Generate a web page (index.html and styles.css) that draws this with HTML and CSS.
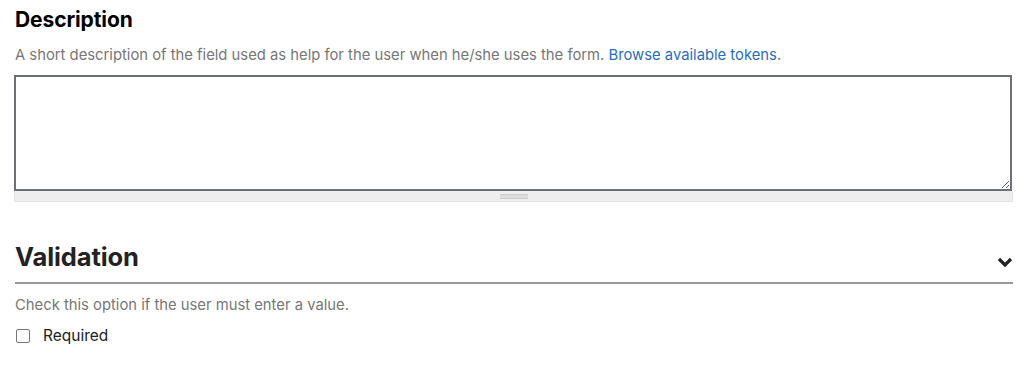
FILE: index.html
```html
<!DOCTYPE html>
<html>
<head>
<meta charset="utf-8">
<link rel="stylesheet" href="styles.css">
</head>
<body>
<div class="page">
  <section class="field">
    <label class="label" for="desc">Description</label>
    <div class="help">A short description of the field used as help for the user when he/she uses the form. <a href="#" class="link">Browse available tokens</a>.</div>
    <div class="textarea-wrap">
      <textarea id="desc" class="textarea"></textarea>
      <div class="grippie"><span class="grip"></span></div>
    </div>
  </section>
  <section class="details">
    <div class="summary">
      <h2 class="summary-title">Validation</h2>
      <svg class="chevron" width="16" height="12" viewBox="0 0 16 12"><path d="M2 3 L8 9 L14 3" fill="none" stroke="#222" stroke-width="3.2"/></svg>
    </div>
    <div class="help help2">Check this option if the user must enter a value.</div>
    <label class="check"><span class="box"></span>Required</label>
  </section>
</div>
</body>
</html>
```
FILE: styles.css
```css
html, body { margin: 0; padding: 0; background: #fff; }
body { font-family: Inter, "Noto Sans", sans-serif; color: #222; }
.page { padding: 0 11px 0 15px; }
.field { display: flex; flex-direction: column; }
.label { font-weight: 700; font-size: 21px; color: #000; padding-top: 7px; line-height: 26px; letter-spacing: -0.1px; }
.help { font-size: 14.8px; color: #777; line-height: 20px; margin-top: 12px; }
.link { color: #2a6ebb; text-decoration: none; }
.textarea-wrap { margin-top: 10px; display: flex; flex-direction: column; }
.textarea { box-sizing: border-box; height: 116px; width: 100%; border: 2px solid #6c7176; margin: 0 0 0 -1px; padding: 0; resize: vertical; display: block; font: inherit; }
.grippie { height: 11px; background: #eee; border: 1px solid #e4e4e4; border-top: 0; box-sizing: border-box; display: flex; justify-content: center; align-items: center; margin-left: -1px; }
.grip { width: 28px; height: 5px; border-top: 1px solid #ccc; border-bottom: 1px solid #ccc; background: #ddd; box-sizing: border-box; }
.details { margin-top: 40px; }
.summary { display: flex; align-items: flex-start; justify-content: space-between; border-bottom: 2px solid #999; height: 40px; }
.summary-title { margin: 0; font-size: 25.5px; font-weight: 700; color: #222; line-height: 30px; letter-spacing: -0.1px; }
.chevron { margin-top: 14px; }
.help2 { margin-top: 11px; }
.check { display: flex; align-items: center; margin-top: 11px; font-size: 15.5px; line-height: 20px; color: #222; }
.box { width: 12px; height: 12px; border: 1px solid #777; border-radius: 2px; margin: 0 13px 0 1px; }
```
